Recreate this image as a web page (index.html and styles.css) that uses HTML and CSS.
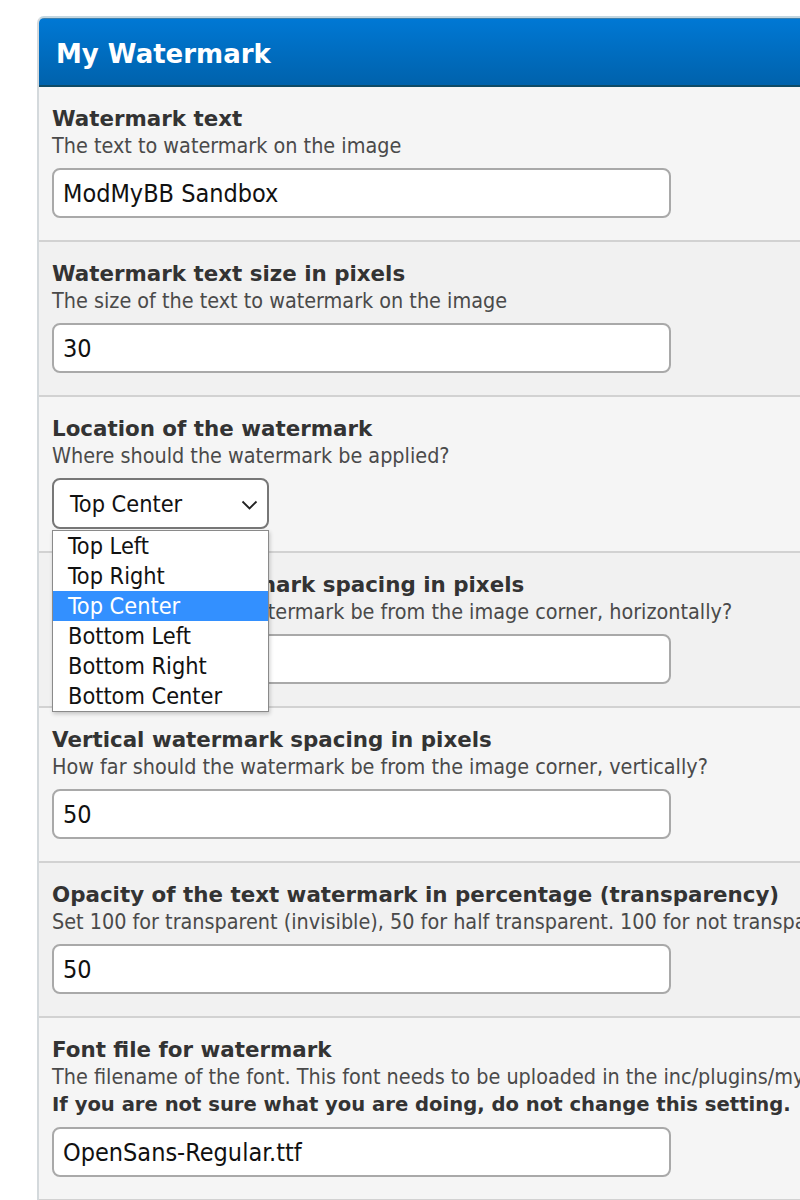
FILE: index.html
```html
<!DOCTYPE html>
<html lang="en">
<head>
    <meta charset="UTF-8">
    <meta name="viewport" content="width=device-width, initial-scale=1.0">
    <title>My Watermark</title>
    <link rel="stylesheet" href="styles.css">
</head>
<body>

    <div class="page">
        <div class="border-box">
            <div class="thead">My Watermark</div>

            <!-- Texto -->
            <div class="row trow1">
                <label class="setting-title">Watermark text</label>
                <div class="description">The text to watermark on the image</div>
                <input type="text" class="text-input" value="ModMyBB Sandbox">
            </div>

            <div class="row trow2">
                <label class="setting-title">Watermark text size in pixels</label>
                <div class="description">The size of the text to watermark on the image</div>
                <input type="text" class="text-input" value="30">
            </div>

            <!-- Local -->
            <div class="row trow1">
                <label class="setting-title">Location of the watermark</label>
                <div class="description">Where should the watermark be applied?</div>
                <div class="select-wrap">
                    <div class="select-box">
                        <span>Top Center</span>
                        <svg class="chevron" width="17" height="10" viewBox="0 0 17 10">
                            <path d="M1.5 1.5 L8.5 8.5 L15.5 1.5" fill="none" stroke="#222" stroke-width="1.8"/>
                        </svg>
                    </div>
                    <ul class="select-list">
                        <li>Top Left</li>
                        <li>Top Right</li>
                        <li class="selected">Top Center</li>
                        <li>Bottom Left</li>
                        <li>Bottom Right</li>
                        <li>Bottom Center</li>
                    </ul>
                </div>
            </div>

            <div class="row trow2">
                <label class="setting-title">Horizontal watermark spacing in pixels</label>
                <div class="description">How far should the watermark be from the image corner, horizontally?</div>
                <input type="text" class="text-input" value="50">
            </div>

            <div class="row trow1">
                <label class="setting-title">Vertical watermark spacing in pixels</label>
                <div class="description">How far should the watermark be from the image corner, vertically?</div>
                <input type="text" class="text-input" value="50">
            </div>

            <div class="row trow2">
                <label class="setting-title">Opacity of the text watermark in percentage (transparency)</label>
                <div class="description">Set 100 for transparent (invisible), 50 for half transparent. 100 for not transparent (visible).</div>
                <input type="text" class="text-input" value="50">
            </div>

            <!-- Fonte -->
            <div class="row trow1">
                <label class="setting-title">Font file for watermark</label>
                <div class="description">The filename of the font. This font needs to be uploaded in the inc/plugins/mywatermark/ folder.<br>
                    <strong>If you are not sure what you are doing, do not change this setting.</strong></div>
                <input type="text" class="text-input" value="OpenSans-Regular.ttf">
            </div>
        </div>
    </div>

</body>
</html>
```

FILE: styles.css
```css
html, body {
    margin: 0;
    padding: 0;
    background-color: #fff;
}

.page {
    width: 800px;
    height: 1200px;
    overflow: hidden;
    padding: 16px 0 0 37px;
    box-sizing: border-box;
}

.border-box {
    width: 1000px;
    border: 2px solid #d4d9dc;
    border-top-color: #c3d6e0;
    border-radius: 7px 7px 0 0;
    overflow: hidden;
    background-color: #f5f5f5;
}

.thead {
    height: 69px;
    box-sizing: border-box;
    padding: 19px 0 0 17px;
    background: linear-gradient(#0078d4, #0062ac);
    border-top: 1px solid #3a7fae;
    border-bottom: 2px solid #0e4b66;
    color: #fff;
    font-family: "DejaVu Sans", Verdana, sans-serif;
    font-weight: bold;
    font-size: 26px;
    line-height: 32px;
}

.row {
    padding: 18px 13px 22px;
    border-bottom: 2px solid #d2d2d2;
    color: #333;
}

.trow1 {
    background-color: #f5f5f5;
}

.trow2 {
    background-color: #f1f1f1;
}

.setting-title {
    display: block;
    font-family: "DejaVu Sans", Verdana, sans-serif;
    font-weight: bold;
    font-size: 21.4px;
    line-height: 27px;
    color: #333;
    white-space: nowrap;
}

.description {
    font-family: "DejaVu Sans Condensed", "DejaVu Sans", sans-serif;
    font-size: 21.4px;
    line-height: 27px;
    color: #4a4a4a;
    white-space: nowrap;
}

.description strong {
    font-family: "DejaVu Sans", Verdana, sans-serif;
    font-size: 19.6px;
    color: #333;
}

.text-input {
    display: block;
    margin-top: 9px;
    width: 619px;
    height: 50px;
    box-sizing: border-box;
    padding: 0 9px;
    border: 2px solid #a9a9a9;
    border-radius: 8px;
    background-color: #fff;
    font-family: "DejaVu Sans Condensed", "DejaVu Sans", sans-serif;
    font-size: 25px;
    color: #111;
    outline: none;
}

.select-wrap {
    position: relative;
    margin-top: 9px;
    width: 217px;
}

.select-box {
    height: 51px;
    box-sizing: border-box;
    border: 2px solid #777;
    border-radius: 8px;
    background-color: #fff;
    display: flex;
    align-items: center;
    justify-content: space-between;
    padding: 0 9px 0 16px;
    font-family: "DejaVu Sans Condensed", "DejaVu Sans", sans-serif;
    font-size: 23.3px;
    color: #111;
}

.chevron {
    margin-top: 2px;
}

.select-list {
    position: absolute;
    top: 52px;
    left: 0;
    width: 217px;
    box-sizing: border-box;
    margin: 0;
    padding: 0;
    list-style: none;
    background-color: #fff;
    border: 1px solid #8a8a8a;
    box-shadow: 1px 2px 4px rgba(0, 0, 0, 0.2);
    font-family: "DejaVu Sans Condensed", "DejaVu Sans", sans-serif;
    font-size: 23.3px;
    color: #111;
    z-index: 5;
}

.select-list li {
    height: 30px;
    line-height: 30px;
    padding-left: 15px;
}

.select-list li.selected {
    background-color: #3390ff;
    color: #fff;
}
```
